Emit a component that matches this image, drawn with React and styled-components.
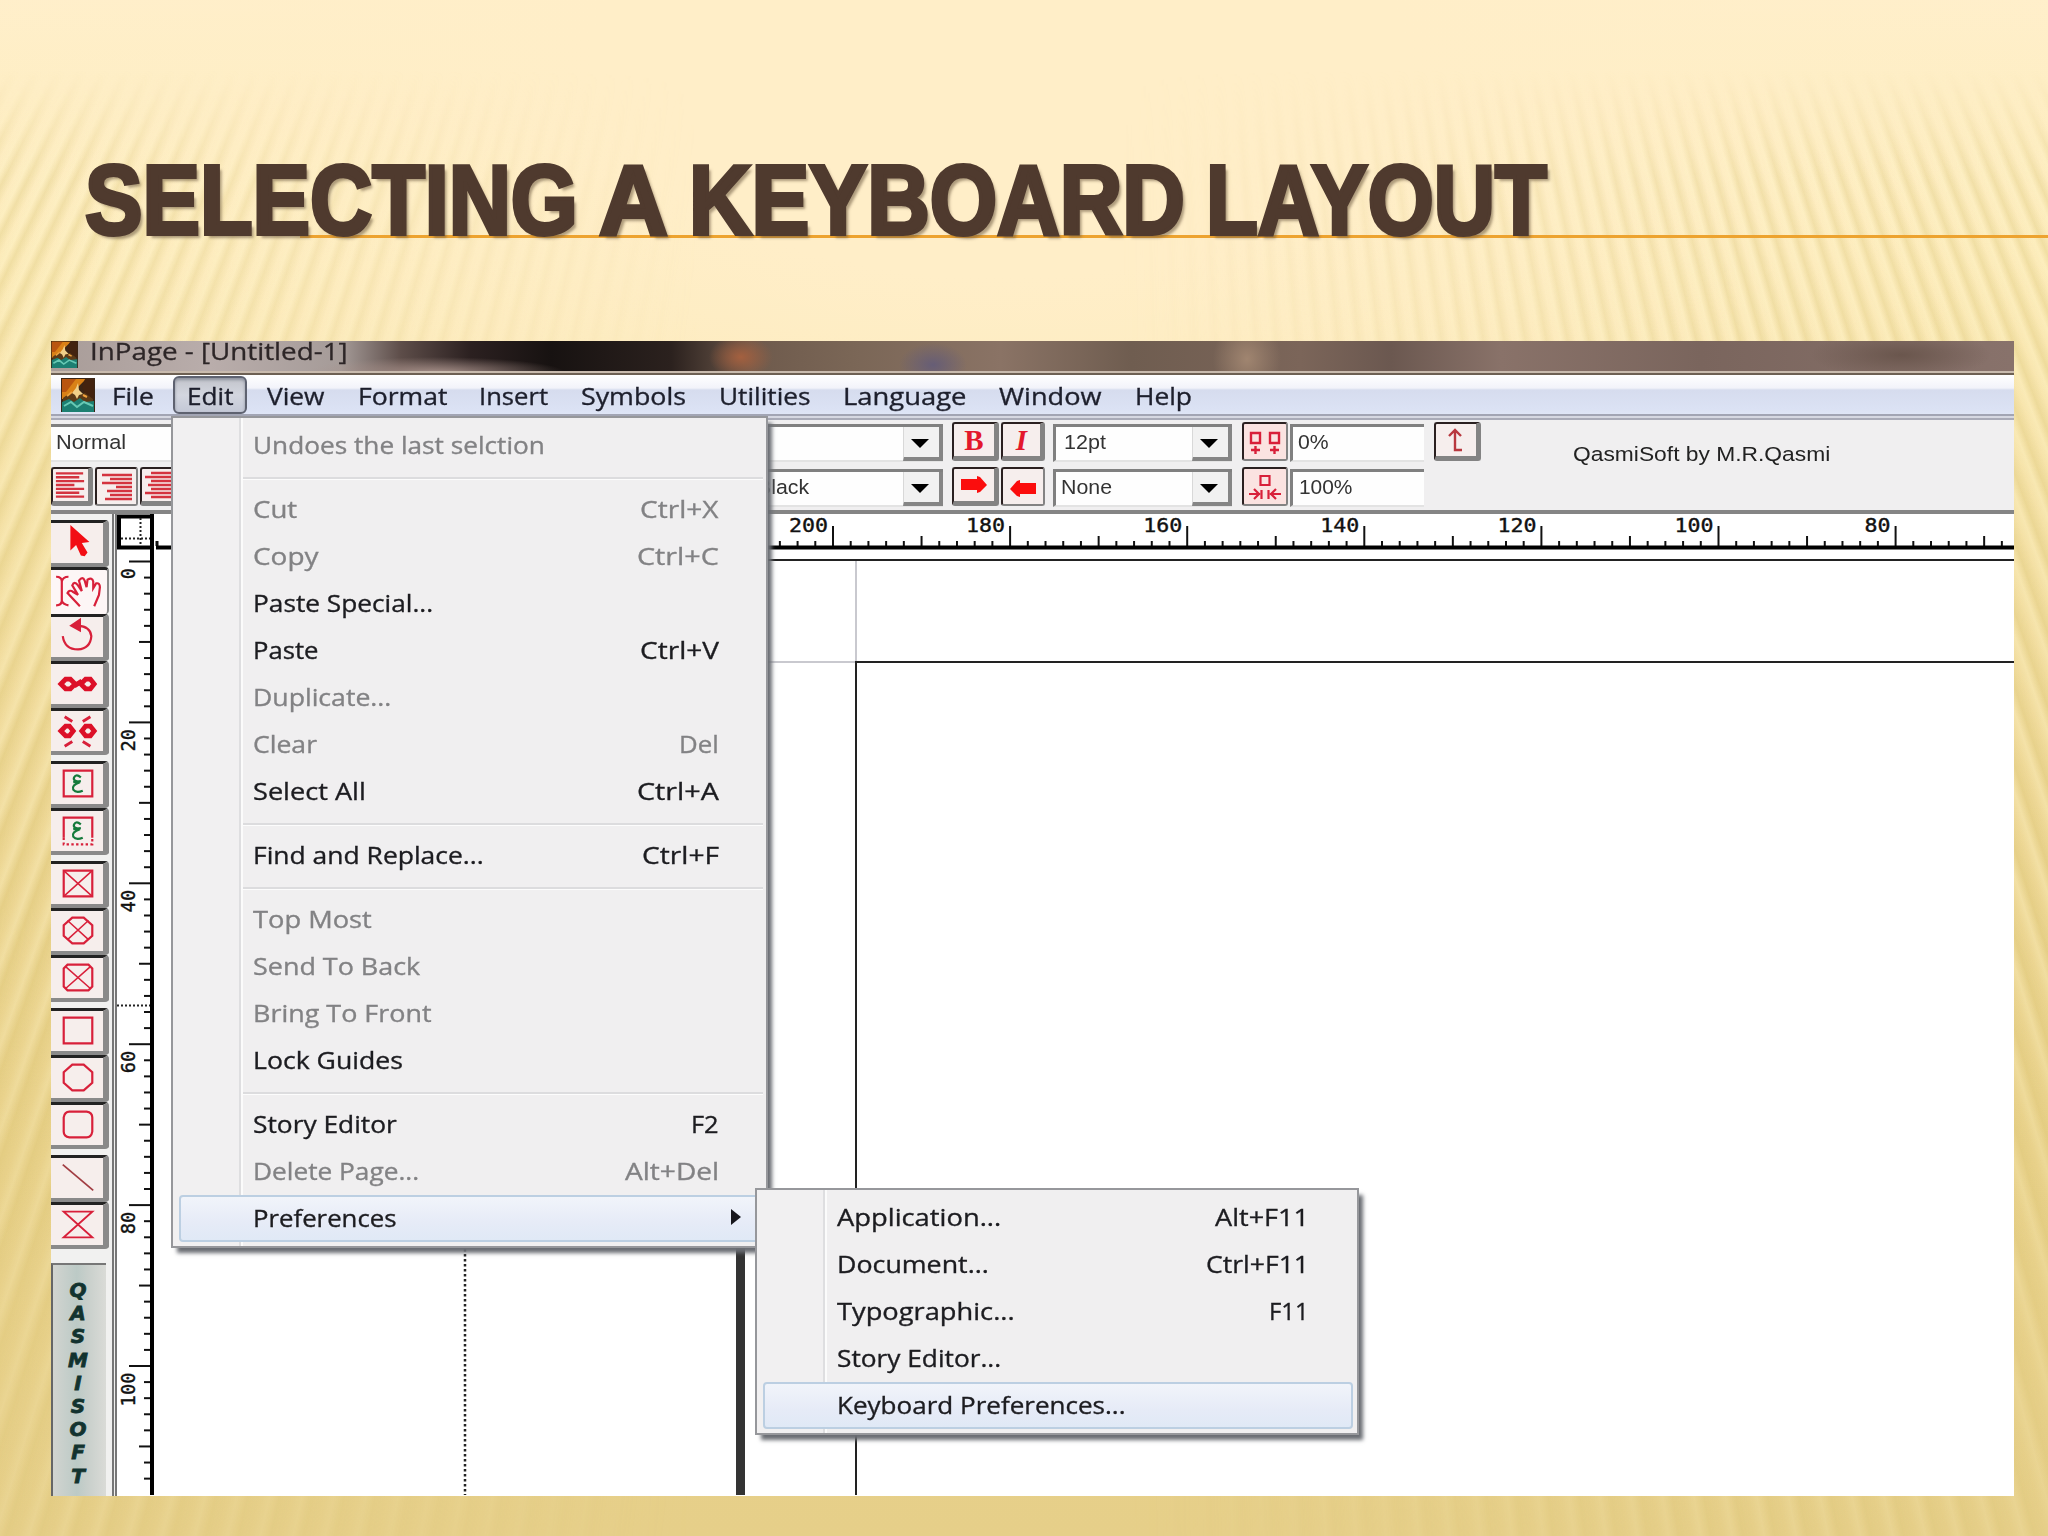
import React, { useLayoutEffect, useRef, useState } from "react";
import styled, { createGlobalStyle, css } from "styled-components";

const GlobalStyle = createGlobalStyle`
  * {
    box-sizing: border-box;
  }

  body {
    margin: 0;
    overflow: hidden;
    background: #e9d593;
  }
`;

const ui = `"Open Sans", "Noto Sans", sans-serif`;
const arial = `"Liberation Sans", Arial, sans-serif`;
const red = "#d8203a";

//slide
const Slide = styled.main`
  position: relative;
  width: 2048px;
  height: 1536px;
  display: flex;
  flex-direction: column;
  overflow: hidden;
  background:
    radial-gradient(ellipse 1150px 620px at 1000px 60px, #ffeec8 35%, #ffeec800 100%),
    linear-gradient(#ffefcb 0, #feeec4 90px, #fcebb8 260px, #f6e3a9 480px, #efd998 800px, #e9d28b 1150px, #e6cf89 1536px);
`;

const Rays = styled.div`
  position: absolute;
  inset: 0;
  background: repeating-conic-gradient(
    from 0deg at 1100px -2000px,
    #cfae4a00 0deg,
    #cdb55a3c 0.2deg,
    #fff4c84c 0.36deg,
    #cfae4a00 0.5deg
  );
  mask-image: linear-gradient(transparent 70px, #000 180px, #000 900px, #0007 1400px),
    linear-gradient(90deg, #000 0, #000 60px, transparent 700px, transparent 1120px, #000 1750px);
  mask-composite: intersect;
`;

const Header = styled.header`
  position: relative;
  height: 341px;
  padding: 149px 0 0 85px;
  display: flex;
  align-items: flex-start;
  flex: none;
`;

const Rule = styled.div`
  position: absolute;
  left: 300px;
  right: 0;
  top: 235px;
  height: 3px;
  background: #eda32f;
`;

const Title = styled.h1`
  position: relative;
  margin: 0;
  display: flex;
  gap: 21px;
  font: bold 98px/102px ${arial};
  color: #4f3a2e;
  -webkit-text-stroke: 4px #4f3a2e;
  text-shadow: 4px 4px 3px #6e5a4190;
`;

//text squeezed or stretched to a given width
const FitBox = styled.span`
  display: inline-block;
  flex: none;
  white-space: pre;
`;

const FitInner = styled.span`
  display: inline-block;
  transform-origin: 0 50%;
`;

const Fit = ({ w, children }) => {
  const ref = useRef();
  const [scale, setScale] = useState(1);

  useLayoutEffect(() => {
    setScale(w / ref.current.offsetWidth);
  }, [w, children]);

  return (
    <FitBox style={{ width: w }}>
      <FitInner ref={ref} style={{ transform: `scaleX(${scale})` }}>
        {children}
      </FitInner>
    </FitBox>
  );
};

//window
const Window = styled.section`
  position: relative;
  margin-left: 51px;
  width: 1963px;
  height: 1155px;
  display: flex;
  flex-direction: column;
  background: #fff;
`;

const TitleBar = styled.div`
  height: 34px;
  flex: none;
  display: flex;
  align-items: flex-start;
  gap: 12px;
  font: 24px/20px ${ui};
  color: #2d2627;
  -webkit-text-stroke: 0.3px;
  border-bottom: 2px solid #6d6053;
  box-shadow: inset 0 -2px #c9bbae;
  background:
    radial-gradient(ellipse 32px 22px at 690px 16px, #a4603f, #a4603f00),
    radial-gradient(ellipse 34px 22px at 882px 24px, #665d76, #665d7600),
    radial-gradient(ellipse 34px 40px at 1196px 18px, #a08570, #a0857000),
    radial-gradient(ellipse 90px 24px at 1850px 14px, #6a564d, #6a564d00),
    radial-gradient(ellipse 130px 16px at 385px 32px, #a8918a, #a8918a00),
    linear-gradient(90deg, #a89c98 0, #b9adab 160px, #a59b98 290px, #5d4d49 350px, #2b2020 420px, #171211 500px, #2b211e 620px, #6e5a4c 700px, #7a6656 800px, #8a7365 950px, #6f5d50 1080px, #7b6559 1250px, #6b5850 1340px, #897269 1450px, #7a655d 1650px, #88726b 1960px);
`;

const MenuBar = styled.nav`
  height: 41px;
  flex: none;
  padding: 1px 0 0 10px;
  display: flex;
  align-items: center;
  font: 24.5px/36px ${ui};
  color: #1d1f2c;
  -webkit-text-stroke: 0.35px;
  border-bottom: 2px solid #a2a5b4;
  background: linear-gradient(#ffffff 0, #f2f3fa 13px, #d6dcee 15px, #dbe2f4 34px, #dfe5f6 100%);
`;

const MenuName = styled.div`
  height: 39px;
  margin-left: ${(p) => p.$gap}px;
  padding-top: 2px;
  display: flex;
  align-items: center;
  ${(p) =>
    p.$open &&
    css`
      width: 74px;
      height: 38px;
      padding-left: 12px;
      border: 2px solid #5e6270;
      border-radius: 6px;
      background: linear-gradient(#c2c4cb, #d3d6df 50%, #c3c8d6);
      box-shadow: inset 0 2px 3px #8c909c;
    `}
`;

const ToolBar = styled.div`
  height: 98px;
  flex: none;
  padding: 4px 0 0;
  display: flex;
  border-top: 2px solid #d6d8e2;
  border-bottom: 4px solid #858585;
  background: #f0eff0;
  box-shadow: inset 0 2px #a9abb8;
`;

const ToolRows = styled.div`
  display: flex;
  flex-direction: column;
  gap: 6px;
`;

const ToolRow = styled.div`
  height: 39px;
  display: flex;
  align-items: flex-start;
`;

const Field = styled.div`
  width: ${(p) => p.$w}px;
  height: 38px;
  margin: 2px ${(p) => p.$gap || 0}px 0 0;
  padding-left: ${(p) => p.$pad || 5}px;
  display: flex;
  align-items: center;
  justify-content: space-between;
  border: solid #808080;
  border-width: 3px 0 0 ${(p) => (p.$flat ? 0 : 3)}px;
  border-bottom: 2px solid #e3e3e3;
  background: #fefefe;
  font: 20.5px/30px ${arial};
  color: #333;

  & > ${FitBox} {
    height: 34px;
  }
`;

const Drop = styled.span`
  width: 40px;
  height: 34px;
  display: flex;
  align-items: center;
  justify-content: center;
  background: #f1f1f1;
  border: solid #858585;
  border-width: 0 4px 4px 1px;
  border-left-color: #d8d8d8;

  &::before {
    content: "";
    margin: 4px 3px 0 0;
    border: solid transparent;
    border-width: 9px 9px 0;
    border-top-color: #000;
  }
`;

const ToolButton = styled.div`
  width: ${(p) => p.$w}px;
  height: 39px;
  margin-right: ${(p) => p.$gap}px;
  flex: none;
  display: flex;
  align-items: center;
  justify-content: center;
  overflow: hidden;
  border: 2px solid #2a2020;
  border-width: 2px ${(p) => (p.$down ? 2 : 5)}px ${(p) => (p.$down ? 2 : 5)}px 2px;
  border-right-color: #838383;
  border-bottom-color: #838383;
  border-radius: 3px;
  background: ${(p) => (p.$pink ? "#fbe3e1" : "#f6eeed")};
`;

const Letter = styled.span`
  font: ${(p) => (p.$italic ? "italic" : "normal")} bold 29px/30px "Liberation Serif", serif;
  color: #e3172c;
`;

const Credit = styled.div`
  margin: 17px 0 0 92px;
  font: 20.5px/30px ${arial};
  color: #222;
`;

//work area
const Work = styled.div`
  flex: 1;
  display: flex;
  min-height: 0;
`;

const ToolBox = styled.aside`
  width: 66px;
  padding-top: 6px;
  flex: none;
  display: flex;
  flex-direction: column;
  gap: 6px;
  background: #f1f1f0;
  border-right: 5px double #777;
`;

const Tool = styled.div`
  width: 58px;
  height: 47px;
  display: flex;
  align-items: center;
  padding-left: 7px;
  border-top: 3px solid #222;
  border-bottom: ${(p) => (p.$down ? 0 : 4)}px solid #8a8a8a;
  border-right: ${(p) => (p.$down ? 2 : 6)}px solid #8a8a8a;
  border-radius: 0 4px 4px 0;
  background: ${(p) => (p.$down ? "#fdf6f6" : "#f6eeec")};
`;

const Brand = styled.div`
  width: 55px;
  flex: 1;
  margin-top: 8px;
  padding: 14px 3px 0 0;
  display: flex;
  flex-direction: column;
  align-items: center;
  border-top: 2px solid #777;
  border-left: 2px solid #666;
  background: linear-gradient(90deg, #d2d4d0, #bccac6 45%, #c8cfcb 65%, #dadbd7);
  font: italic bold 20px/23.2px "DejaVu Sans", sans-serif;
  color: #12332f;
  -webkit-text-stroke: 0.8px;
`;

const SideRuler = styled.svg`
  width: 37px;
  height: 981px;
  flex: none;
`;

const Paper = styled.svg`
  width: 1860px;
  height: 981px;
  flex: none;
`;

//menus
const Popup = styled.div`
  position: absolute;
  left: ${(p) => p.$x}px;
  top: ${(p) => p.$y}px;
  width: ${(p) => p.$w}px;
  padding: 4px;
  border: 2px solid #96979b;
  background: linear-gradient(90deg, #f1f0f1 0, #f1f0f1 66px, #dedee0 66px, #dedee0 68px, #fbfbfb 68px, #fbfbfb 70px, #f0eff0 70px);
  box-shadow: 5px 6px 4px -1px #6a6d73;
  font: 24.5px/43px ${ui};
  -webkit-text-stroke: 0.35px;
`;

const Item = styled.div`
  height: 47px;
  margin: 0 0 0 2px;
  padding: 0 ${(p) => p.$right}px 3px 72px;
  display: flex;
  align-items: center;
  justify-content: space-between;
  color: ${(p) => (p.$off ? "#828284" : "#1c1c20")};
  border: 2px solid transparent;
  border-radius: 4px;
  ${(p) =>
    p.$hot &&
    css`
      border-color: #bccfe2;
      background: linear-gradient(#f1f4fa, #e6ebf7 60%, #e0e9f6);
    `}
`;

const Divider = styled.hr`
  height: 3px;
  margin: 8px -1px 6px 66px;
  border: 0;
  border-top: 2px solid #dcdcde;
  background: #fcfcfc;
`;

const Arrow = styled.span`
  width: 0;
  border: solid transparent;
  border-width: 8px 0 8px 10px;
  border-left-color: #16161c;
`;

//icons
const Logo = ({ size }) => (
  <svg width={size} height={size} viewBox="0 0 34 34">
    <rect width="34" height="34" fill="#3a2515" />
    <path d="M1 1h24l-7 7-4 7-9 6H1z" fill="#d98116" />
    <path d="M1 1h14L5 14H1z" fill="#b95510" />
    <path d="M24 1h9v20l-8-3-4-9z" fill="#43230f" />
    <path d="M2 20l8-6 8 3 6-2 8 6v4H2z" fill="#5b3a17" />
    <path d="M11 15l4-5 2-5 1 7 4 4-4 1-2 4-2-4z" fill="#f0d089" />
    <path d="M1 24l7-3 5 3 6-4 5 4 9-1v11H1z" fill="#1c7f72" />
    <path d="M3 28l7-4 6 5 7-5 9 4" fill="none" stroke="#67c9b4" strokeWidth="2" />
    <path d="M6 18l5-4M22 17l4 2" fill="none" stroke="#f0a23c" strokeWidth="2" />
  </svg>
);

const aligns = {
  left: [[3, 31], [3, 27], [3, 32], [3, 22], [3, 32], [3, 27], [3, 32]],
  right: [[3, 33], [11, 33], [3, 33], [17, 33], [8, 33], [11, 33], [6, 33]],
  center: [[9, 33], [3, 33], [9, 33], [6, 33], [9, 33], [3, 33], [9, 33]],
};

const AlignIcon = ({ kind }) => (
  <svg width="36" height="30" viewBox="0 0 36 30">
    {aligns[kind].map(([a, b], i) => (
      <path key={i} d={`M${a} ${3 + i * 4}H${b}`} stroke="#d4333f" strokeWidth="2.4" />
    ))}
  </svg>
);

const FatArrow = ({ back }) => (
  <svg width="28" height="20" viewBox="0 0 28 20">
    <path
      d="M1 4h16V1l3 1 7 8-7 7-3 1v-3H1z"
      fill="#fb0d0d"
      transform={back ? "translate(28 2) scale(-1 1)" : undefined}
    />
  </svg>
);

const SpreadIcon = () => (
  <svg width="36" height="32" viewBox="0 0 36 32" fill="none" stroke={red} strokeWidth="2.4">
    <path d="M4 7h9v10H4zM23 7h9v10h-9zM4 24h9M8.500 20v8M23 24h9M27.500 20v8" />
  </svg>
);

const SqueezeIcon = () => (
  <svg width="36" height="32" viewBox="0 0 36 32" fill="none" stroke={red} strokeWidth="2.2">
    <path d="M13.500 5h9v9h-9zM2 23h11M7 18l5 5-5 5M14.500 19v9M34 23H23M29 18l-5 5 5 5M21.500 19v9" />
  </svg>
);

const UpIcon = () => (
  <svg width="24" height="30" viewBox="0 0 24 30" fill="none" stroke="#b8383f" strokeWidth="2.4">
    <path d="M11 5v20h7M5 11l6-6 6 6" />
  </svg>
);

const icons = {
  pick: (
    <path d="M12 0l20 18-8 1 6 10-3 4-4-1-5-11-6 6z" fill="#f20d14" stroke="none" />
  ),
  hand: (
    <path d="M-3 3q6 0 6 5v20q0 5-6 5M10 3q-6 0-7 5M3 28q1 4 7 5M22 34L9 20q2-4 6-1l5 3-6-10q2-5 6 0l4 6-3-11q4-5 6 0l2 7 1-8q5-3 6 2v7l3-5q4-1 4 4l-1 8-5 12" />
  ),
  rotate: (
    <>
      <path d="M4 18q2 14 16 14 13-1 14-14-1-10-14-11" />
      <path d="M13 7l9-6v11z" fill={red} />
    </>
  ),
  link: (
    <path d="M2 19l5-5h5l5 5-5 5H7zM23 19l5-5h5l4 5-4 5h-5zM16 21l8-5" stroke="#dc1028" strokeWidth="5" />
  ),
  unlink: (
    <>
      <path d="M2 19l5-5h4l4 5-4 5H7zM24 19l4-5h5l4 5-4 5h-5z" stroke="#dc1028" strokeWidth="5" />
      <path d="M6 4l8 5M33 4l-8 5M6 35l8-5M33 35l-8-5" strokeWidth="3" />
    </>
  ),
  text: (
    <>
      <path d="M5 5h30v27H5z" />
      <path d="M23 12q-5-4-7 0t6 5q-9 3-7 8 3 4 10 1M15 17l8-1" stroke="#157a3b" />
    </>
  ),
  textDots: (
    <>
      <path d="M5 26V5h30v21" />
      <path d="M5 26v7h30v-7" strokeDasharray="2.5 2.5" />
      <path d="M23 12q-5-4-7 0t6 5q-9 3-7 8 3 4 10 1M15 17l8-1" stroke="#157a3b" />
    </>
  ),
  boxX: (
    <>
      <path d="M5 5h30v27H5z" />
      <path d="M5 5l30 27M35 5L5 32" strokeWidth="1.6" />
    </>
  ),
  roundX: (
    <>
      <path d="M14 5h12l9 8v11l-9 8H14l-9-8V13z" />
      <path d="M9 8l22 20M31 8L9 28" strokeWidth="1.6" />
    </>
  ),
  softX: (
    <>
      <path d="M9 5h22l4 4v19l-4 4H9l-4-4V9z" />
      <path d="M7 7l26 23M33 7L7 30" strokeWidth="1.6" />
    </>
  ),
  box: <path d="M5 5h30v27H5z" />,
  round: <path d="M14 5h12l9 8v11l-9 8H14l-9-8V13z" />,
  soft: <path d="M11 5h18q6 1 6 6v15q-1 6-6 6H11q-6-1-6-6V11q1-6 6-6z" />,
  line: <path d="M4 5l32 27" stroke="#a13d42" strokeWidth="1.8" />,
  hourglass: <path d="M5 5h30L5 32h30z" strokeWidth="2" />,
};

const toolGroups = [
  ["pick", "hand", "rotate", "link", "unlink"],
  ["text", "textDots"],
  ["boxX", "roundX", "softX"],
  ["box", "round", "soft"],
  ["line", "hourglass"],
];

const menuNames = [
  ["File", 42, 17],
  ["Edit", 47, 19],
  ["View", 58, 20],
  ["Format", 89, 33],
  ["Insert", 69, 32],
  ["Symbols", 105, 33],
  ["Utilities", 92, 33],
  ["Language", 123, 32],
  ["Window", 103, 33],
  ["Help", 57, 33],
];

//label, width, shortcut, shortcut width, disabled
const editItems = [
  ["Undoes the last selction", 292, "", 0, true],
  null,
  ["Cut", 44, "Ctrl+X", 79, true],
  ["Copy", 65, "Ctrl+C", 82, true],
  ["Paste Special...", 180],
  ["Paste", 66, "Ctrl+V", 79],
  ["Duplicate...", 138, "", 0, true],
  ["Clear", 64, "Del", 40, true],
  ["Select All", 113, "Ctrl+A", 82],
  null,
  ["Find and Replace...", 231, "Ctrl+F", 77],
  null,
  ["Top Most", 119, "", 0, true],
  ["Send To Back", 167, "", 0, true],
  ["Bring To Front", 178, "", 0, true],
  ["Lock Guides", 150],
  null,
  ["Story Editor", 144, "F2", 28],
  ["Delete Page...", 166, "Alt+Del", 94, true],
];

const prefItems = [
  ["Application...", 164, "Alt+F11", 94],
  ["Document...", 152, "Ctrl+F11", 103],
  ["Typographic...", 178, "F11", 40],
  ["Story Editor...", 164],
  ["Keyboard Preferences...", 289],
];

const mono = {
  fontFamily: '"DejaVu Sans Mono", monospace',
  fontSize: 20,
  fill: "#111",
  stroke: "#111",
  strokeWidth: 0.4,
};

const MenuItem = ({ item, right, hot }) => (
  <Item $right={right} $off={item[4]} $hot={hot}>
    <Fit w={item[1]}>{item[0]}</Fit>
    {item[2] && <Fit w={item[3]}>{item[2]}</Fit>}
  </Item>
);

const VerticalRuler = () => {
  const ticks = [];
  for (let i = 0; i < 58; i++) {
    const y = 47.5 + i * 16.09;
    const len = i % 10 === 0 ? 21 : i % 5 === 0 ? 11 : 6;
    ticks.push(<path key={i} d={`M${33 - len} ${y}h${len}`} stroke="#111" strokeWidth="2" />);
  }
  return (
    <SideRuler viewBox="0 0 37 981">
      <rect width="37" height="981" fill="#fff" />
      {ticks}
      {[0, 20, 40, 60, 80, 100].map((n, i) => (
        <text key={n} {...mono} textAnchor="end" transform={`translate(18 ${54 + i * 160.9}) rotate(-90)`}
          textLength={String(n).length * 11.3} lengthAdjust="spacingAndGlyphs">
          {n}
        </text>
      ))}
      <path d="M0 491.500h33" stroke="#222" strokeWidth="2" strokeDasharray="2 2" />
      <path d="M35 0v981" stroke="#000" strokeWidth="4" />
      <path d="M0 33.500h35M0 2.500h35M2 1v33" stroke="#000" strokeWidth="4" />
      <path d="M4 24.500h29M23.500 4v28" stroke="#222" strokeWidth="2" strokeDasharray="2 2" />
    </SideRuler>
  );
};

const Page = () => {
  const ticks = [];
  for (let i = -4; i < 67; i++) {
    const x = 679 + i * 17.71;
    const len = i % 10 === 0 ? 20 : i % 5 === 0 ? 10 : 5;
    ticks.push(<path key={i} d={`M${x} ${32 - len}v${len}`} stroke="#111" strokeWidth="2" />);
  }
  return (
    <Paper viewBox="0 0 1860 981">
      {ticks}
      {[200, 180, 160, 140, 120, 100, 80].map((n, i) => {
        const w = String(n).length * 13;
        return (
          <text key={n} {...mono} x={674 + i * 177.1 - w} y="18" textLength={w} lengthAdjust="spacingAndGlyphs">
            {n}
          </text>
        );
      })}
      <path d="M3 27v5" stroke="#111" strokeWidth="3" />
      <path d="M2 33.500h1858" stroke="#000" strokeWidth="4" />
      <path d="M586 46h1274" stroke="#222" strokeWidth="2" />
      <path d="M702 47v101M586 148h116" stroke="#c9c9cf" strokeWidth="2" />
      <path d="M702 981V148h1158" fill="none" stroke="#222" strokeWidth="2" />
      <path d="M311 720v261" stroke="#222" strokeWidth="2.500" strokeDasharray="2.500 2.500" />
      <path d="M586.500 720v261" stroke="#333" strokeWidth="9" />
    </Paper>
  );
};

const App = () => {
  return (
    <>
      <GlobalStyle />
      <Slide>
        <Rays />
        <Header>
          <Rule />
          <Title>
            <Fit w={493}>SELECTING</Fit>
            <Fit w={69}>A</Fit>
            <Fit w={496}>KEYBOARD</Fit>
            <Fit w={341}>LAYOUT</Fit>
          </Title>
        </Header>
        <Window>
          <TitleBar>
            <Logo size={27} />
            <Fit w={258}>InPage - [Untitled-1]</Fit>
          </TitleBar>
          <MenuBar>
            <Logo size={34} />
            {menuNames.map(([name, w, gap]) => (
              <MenuName key={name} $gap={gap} $open={name === "Edit"}>
                <Fit w={w}>{name}</Fit>
              </MenuName>
            ))}
          </MenuBar>
          <ToolBar>
            <ToolRows>
              <ToolRow>
                <Field $w={500} $gap={50} $pad={5} $flat>
                  <Fit w={70}>Normal</Fit>
                </Field>
                <Field $w={342} $gap={9}>
                  <span />
                  <Drop />
                </Field>
                <ToolButton $w={47} $gap={2}><Letter>B</Letter></ToolButton>
                <ToolButton $w={44} $gap={8}><Letter $italic>I</Letter></ToolButton>
                <Field $w={179} $gap={10} $pad={8}>
                  <Fit w={42}>12pt</Fit>
                  <Drop />
                </Field>
                <ToolButton $w={46} $gap={2} $down $pink><SpreadIcon /></ToolButton>
                <Field $w={134} $gap={10}>
                  <Fit w={31}>0%</Fit>
                </Field>
                <ToolButton $w={47} $gap={0}><UpIcon /></ToolButton>
              </ToolRow>
              <ToolRow>
                <ToolButton $w={42} $gap={2}><AlignIcon kind="left" /></ToolButton>
                <ToolButton $w={43} $gap={2} $down><AlignIcon kind="right" /></ToolButton>
                <ToolButton $w={43} $gap={418}><AlignIcon kind="center" /></ToolButton>
                <Field $w={342} $gap={9} $pad={153}>
                  <Fit w={52}>Black</Fit>
                  <Drop />
                </Field>
                <ToolButton $w={47} $gap={2}><FatArrow /></ToolButton>
                <ToolButton $w={44} $gap={8} $down><FatArrow back /></ToolButton>
                <Field $w={179} $gap={10} $pad={5}>
                  <Fit w={51}>None</Fit>
                  <Drop />
                </Field>
                <ToolButton $w={46} $gap={2} $down $pink><SqueezeIcon /></ToolButton>
                <Field $w={134} $gap={0} $pad={6}>
                  <Fit w={53}>100%</Fit>
                </Field>
              </ToolRow>
            </ToolRows>
            <Credit>
              <Fit w={257}>QasmiSoft by M.R.Qasmi</Fit>
            </Credit>
          </ToolBar>
          <Work>
            <ToolBox>
              {toolGroups.map((group) => (
                <div key={group[0]}>
                  {group.map((name) => (
                    <Tool key={name} $down={name === "hand"}>
                      <svg width="40" height="38" viewBox="-1 0 42 38" overflow="visible" fill="none" stroke={red} strokeWidth="2.3">
                        {icons[name]}
                      </svg>
                    </Tool>
                  ))}
                </div>
              ))}
              <Brand>
                {"QASMISOFT".split("").map((c, i) => (
                  <span key={i}>{c}</span>
                ))}
              </Brand>
            </ToolBox>
            <VerticalRuler />
            <Page />
          </Work>
          <Popup $x={120} $y={75} $w={597}>
            {editItems.map((item, i) =>
              item ? <MenuItem key={i} item={item} right={41} /> : <Divider key={i} />
            )}
            <Item $right={19} $hot>
              <Fit w={143}>Preferences</Fit>
              <Arrow />
            </Item>
          </Popup>
          <Popup $x={704} $y={847} $w={604}>
            {prefItems.map((item, i) => (
              <MenuItem key={i} item={item} right={42} hot={i === 4} />
            ))}
          </Popup>
        </Window>
      </Slide>
    </>
  );
};

export default App;
